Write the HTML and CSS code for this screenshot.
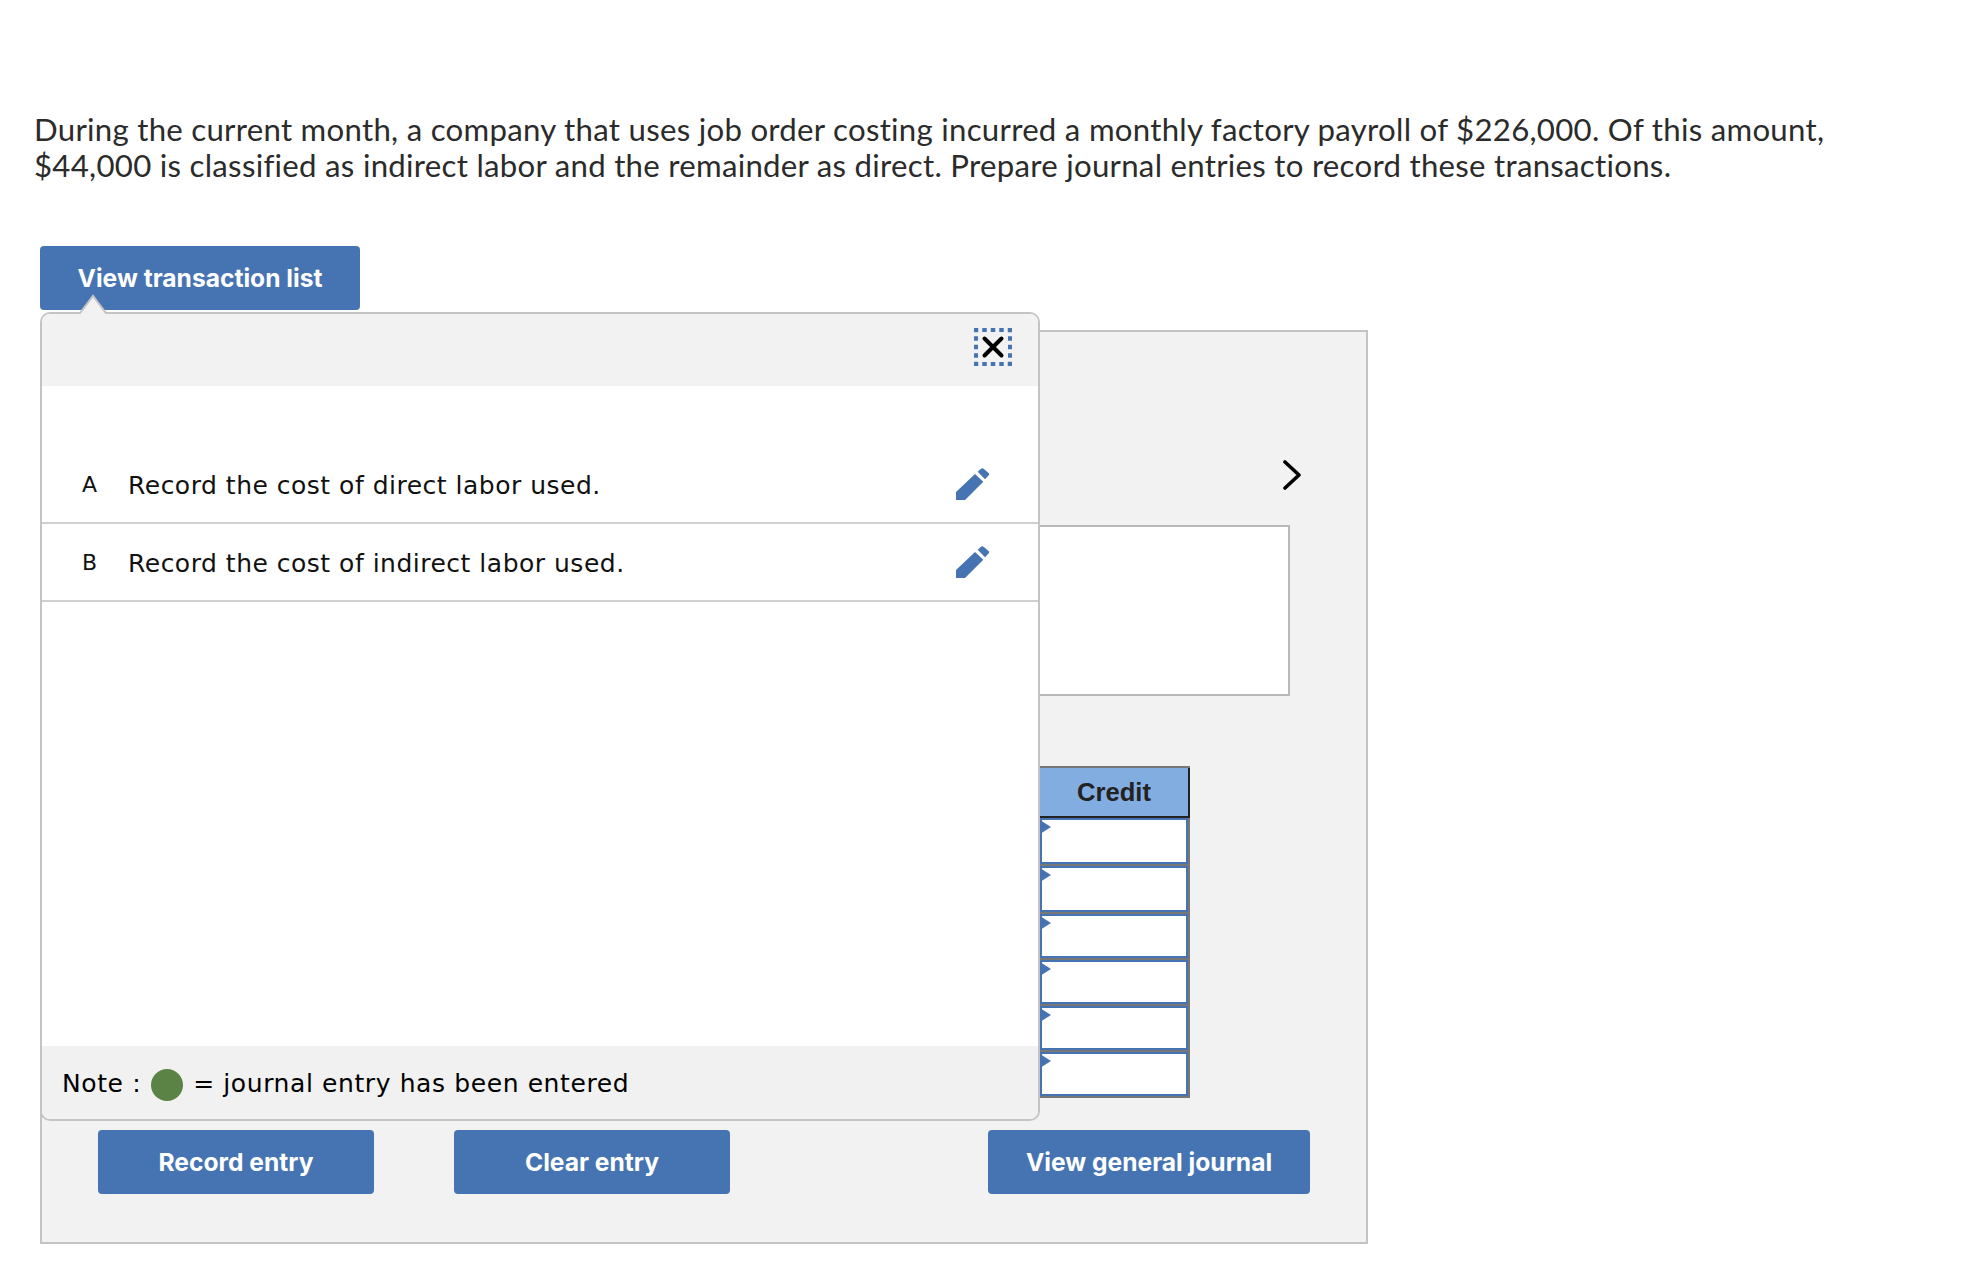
FILE: index.html
```html
<!DOCTYPE html>
<html lang="en">
<head>
    <meta charset="UTF-8">
    <title>Journal entry worksheet</title>
    <link rel="stylesheet" href="styles.css">
</head>
<body>
    <p class="question">During the current month, a company that uses job order costing incurred a monthly factory payroll of $226,000. Of this amount, $44,000 is classified as indirect labor and the remainder as direct. Prepare journal entries to record these transactions.</p>

    <div class="worksheet">
        <button class="btn btn-list">View transaction list</button>

        <div class="panel">
            <div class="panel-nav">
                <svg class="chevron" width="18" height="30" viewBox="0 0 18 30"><path d="M2 2 L16 15 L2 28" fill="none" stroke="#000" stroke-width="3.6" stroke-linecap="round" stroke-linejoin="round"/></svg>
            </div>
            <div class="entry-box"></div>
            <div class="journal">
                <div class="journal-head">Credit</div>
                <div class="journal-cell journal-cell-tall"></div>
                <div class="journal-cell journal-cell-tall"></div>
                <div class="journal-cell"></div>
                <div class="journal-cell"></div>
                <div class="journal-cell"></div>
                <div class="journal-cell"></div>
            </div>
            <div class="panel-actions">
                <button class="btn btn-action">Record entry</button>
                <button class="btn btn-action">Clear entry</button>
                <button class="btn btn-journal">View general journal</button>
            </div>
        </div>

        <div class="popup">
            <svg class="caret" width="34" height="20" viewBox="0 0 34 20"><path d="M4 20 L17 2 L30 20 Z" fill="#f2f2f2"/><path d="M0 19 H4 L17 2 L30 19 H34" fill="none" stroke="#c4c4c4" stroke-width="2"/></svg>
            <div class="popup-head">
                <svg class="close" width="38" height="38" viewBox="0 0 38 38">
                    <rect x="2" y="2" width="34" height="34" fill="none" stroke="#4674b3" stroke-width="4" stroke-dasharray="4.500 4" stroke-dashoffset="2.250"/>
                    <path d="M10.500 10.500 L27.500 27.500 M27.500 10.500 L10.500 27.500" stroke="#000" stroke-width="4" stroke-linecap="round"/>
                </svg>
            </div>
            <div class="popup-body">
                <div class="tx-row">
                    <span class="tx-letter">A</span>
                    <span class="tx-text">Record the cost of direct labor used.</span>
                    <svg class="pencil" width="34" height="32" viewBox="0 0 34 32"><path d="M0 32 V24 L19 6 L27.300 13.700 L9 32 Z M21.700 3.700 L25 0.800 Q26.300 -0.300 27.600 0.800 L32.500 5 Q33.800 6.200 32.500 7.500 L29 11.300 Z" fill="#4674b3"/></svg>
                </div>
                <div class="tx-row">
                    <span class="tx-letter">B</span>
                    <span class="tx-text">Record the cost of indirect labor used.</span>
                    <svg class="pencil" width="34" height="32" viewBox="0 0 34 32"><path d="M0 32 V24 L19 6 L27.300 13.700 L9 32 Z M21.700 3.700 L25 0.800 Q26.300 -0.300 27.600 0.800 L32.500 5 Q33.800 6.200 32.500 7.500 L29 11.300 Z" fill="#4674b3"/></svg>
                </div>
            </div>
            <div class="popup-note">
                Note :
                <span class="dot"></span>
                = journal entry has been entered
            </div>
        </div>
    </div>
</body>
</html>
```

FILE: styles.css
```css
body {
    margin: 0;
    background-color: #fff;
    font-family: "Lato", sans-serif;
}
.question {
    margin: 0;
    padding: 111px 0 0 34px;
    width: 1810px;
    font-size: 31.2px;
    letter-spacing: 0.27px;
    line-height: 36px;
    font-variant-ligatures: none;
    color: #2b2b2b;
}
.worksheet {
    position: relative;
    margin: 63px 0 0 40px;
    width: 1328px;
}
.btn {
    display: block;
    border: none;
    border-radius: 4px;
    background-color: #4674b3;
    color: #fff;
    font-family: "Inter", sans-serif;
    font-size: 24.6px;
    font-weight: 700;
    height: 64px;
    padding: 0;
}
.btn-list {
    width: 320px;
}
.panel {
    box-sizing: border-box;
    width: 1328px;
    height: 914px;
    margin-top: 20px;
    border: 2px solid #c4c4c4;
    background-color: #f2f2f2;
}
.panel-nav {
    display: flex;
    justify-content: flex-end;
    height: 193px;
    padding: 128px 65px 0 0;
    box-sizing: border-box;
}
.entry-box {
    box-sizing: border-box;
    width: 1248px;
    height: 171px;
    border: 2px solid #b8b8b8;
    background-color: #fff;
}
.journal {
    width: 150px;
    margin: 70px 0 0 998px;
    background-color: #777;
    padding: 2px 0;
}
.journal-head {
    box-sizing: border-box;
    height: 50px;
    border-right: 2px solid #222;
    border-bottom: 2px solid #222;
    background-color: #82ade0;
    color: #222;
    font-family: "Liberation Sans", sans-serif;
    font-size: 25.6px;
    font-weight: bold;
    line-height: 48px;
    text-align: center;
}
.journal-cell {
    position: relative;
    box-sizing: border-box;
    height: 44px;
    margin: 0 2px 2px 0;
    border: 2px solid #4674b3;
    background-color: #fff;
}
.journal-cell-tall {
    height: 46px;
}
.journal-cell:last-child {
    margin-bottom: 0;
}
.journal-cell::before {
    content: "";
    position: absolute;
    left: -2px;
    top: 0;
    border-left: 11px solid #4674b3;
    border-top: 7px solid transparent;
    border-bottom: 7px solid transparent;
}
.panel-actions {
    display: flex;
    margin: 32px 0 0 56px;
}
.btn-action {
    width: 276px;
    margin-right: 80px;
}
.btn-journal {
    width: 322px;
    margin-left: 178px;
}
.popup {
    position: absolute;
    left: 0;
    top: 66px;
    box-sizing: border-box;
    width: 1000px;
    height: 809px;
    border: 2px solid #c4c4c4;
    border-radius: 10px;
    background-color: #fff;
    display: flex;
    flex-direction: column;
}
.caret {
    position: absolute;
    left: 34px;
    top: -20px;
}
.popup-head {
    display: flex;
    justify-content: flex-end;
    box-sizing: border-box;
    height: 72px;
    padding: 14px 26px 0 0;
    background-color: #f2f2f2;
    border-radius: 8px 8px 0 0;
}
.popup-body {
    flex: 1;
    padding-top: 60px;
    font-family: "DejaVu Sans", sans-serif;
    font-size: 25px;
    letter-spacing: 0.5px;
    color: #111;
}
.tx-row {
    display: flex;
    align-items: center;
    box-sizing: border-box;
    height: 78px;
    padding: 0 48px 0 40px;
    border-bottom: 2px solid #d0d0d0;
}
.tx-letter {
    width: 46px;
    font-size: 22px;
    letter-spacing: 0;
}
.tx-text {
    flex: 1;
    padding-top: 2px;
}
.popup-note {
    display: flex;
    align-items: center;
    gap: 10px;
    height: 73px;
    box-sizing: border-box;
    padding: 1px 0 0 20px;
    background-color: #f1f1f1;
    border-radius: 0 0 8px 8px;
    font-family: "DejaVu Sans", sans-serif;
    font-size: 25px;
    letter-spacing: 0.6px;
    color: #000;
}
.dot {
    width: 32px;
    height: 32px;
    margin-top: 3px;
    border-radius: 50%;
    background-color: #5a8345;
}
```
